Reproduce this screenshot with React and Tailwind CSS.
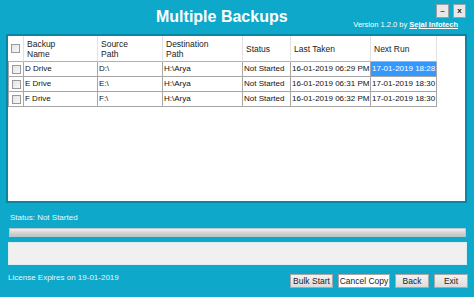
import { Fragment } from "react";

const rows = [
  { name: "D Drive", src: "D:\\", dest: "H:\\Arya", status: "Not Started", last: "16-01-2019 06:29 PM", next: "17-01-2019 18:28", selected: true },
  { name: "E Drive", src: "E:\\", dest: "H:\\Arya", status: "Not Started", last: "16-01-2019 06:31 PM", next: "17-01-2019 18:30" },
  { name: "F Drive", src: "F:\\", dest: "H:\\Arya", status: "Not Started", last: "16-01-2019 06:32 PM", next: "17-01-2019 18:30" },
];

function Check() {
  return <span className="block w-[9px] h-[9px] border border-[#9a9a9a] bg-gradient-to-br from-[#e4e4e4] to-[#f8f8f8]" />;
}

function Btn({ children, light, w }) {
  return (
    <button
      className={`h-[14px] ${w} border border-[#a8a8a8] text-[8.5px] leading-[12px] text-[#222] ${
        light ? "bg-white" : "bg-gradient-to-b from-[#f2f2f2] to-[#dcdcdc]"
      }`}
    >
      {children}
    </button>
  );
}

export default function App() {
  const head = "flex items-center px-[3px] border-r border-[#e2e2e2] border-b border-b-[#b0b0b0] text-[8.5px] leading-[10px] text-[#222]";
  const cell = "flex items-center px-[1px] border-r border-b border-[#a6a6a6] text-[8px] leading-[10px] text-[#111] whitespace-nowrap";

  return (
    <div className="w-[474px] h-[297px] bg-[#0ea8cb] flex flex-col font-['Liberation_Sans',Arial,sans-serif] overflow-hidden">
      {/* title bar */}
      <div className="relative h-[34px] flex items-start shrink-0">
        <h1 className="ml-[156px] mt-[8px] text-[16px] leading-[18px] font-bold text-white">Multiple Backups</h1>
        <div className="ml-auto mr-[16px] mt-[20px] text-[7.5px] leading-[9px] text-white">
          Version 1.2.0 by <span className="font-bold underline">Sejal Infotech</span>
        </div>
        <div className="absolute right-[8px] top-[4px] flex gap-[4px]">
          <span className="w-[13px] h-[14px] bg-[#e8e8e8] border border-[#a0a0a0] text-[8px] leading-[12px] text-center font-bold text-[#333]">–</span>
          <span className="w-[13px] h-[14px] bg-[#e8e8e8] border border-[#a0a0a0] text-[8px] leading-[12px] text-center font-bold text-[#222]">x</span>
        </div>
      </div>

      {/* grid panel */}
      <div className="mx-[6px] w-[461px] h-[169px] shrink-0 bg-white border-2 border-[#0a86a4]">
        <div className="grid grid-cols-[16px_74px_65px_80px_48px_80px_66px] grid-rows-[26px_15px_15px_15px] w-fit">
          <div className="flex items-center justify-center border-r border-[#e2e2e2] border-b border-b-[#b0b0b0]">
            <Check />
          </div>
          <div className={head}>Backup<br />Name</div>
          <div className={head}>Source<br />Path</div>
          <div className={head}>Destination<br />Path</div>
          <div className={head}>Status</div>
          <div className={head}>Last Taken</div>
          <div className={head}>Next Run</div>
          {rows.map((r) => (
            <Fragment key={r.name}>
              <div className="flex items-center justify-center border-r border-b border-l border-[#a6a6a6]">
                <Check />
              </div>
              <div className={cell}>{r.name}</div>
              <div className={cell}>{r.src}</div>
              <div className={cell}>{r.dest}</div>
              <div className={cell}>{r.status}</div>
              <div className={cell}>{r.last}</div>
              <div className={`${cell} ${r.selected ? "bg-[#3399ff] !text-white" : ""}`}>{r.next}</div>
            </Fragment>
          ))}
        </div>
      </div>

      {/* status area */}
      <div className="flex flex-col px-[8px] shrink-0">
        <div className="mt-[10px] ml-[2px] text-[8px] leading-[10px] text-[#eaf8fb]">Status: Not Started</div>
        <div className="mt-[5px] ml-[1px] h-[9px] border border-[#b9c7cb] bg-gradient-to-b from-[#f0f0f0] via-[#d6d6d6] to-[#c4c4c4]" />
        <div className="mt-[5px] h-[23px] w-[459px] bg-[#f0f0f0] border border-[#d9eef3]" />
        <div className="mt-[7px] flex items-start">
          <span className="mt-[1px] text-[8px] leading-[10px] text-[#e6f6fa]">License Expires on 19-01-2019</span>
          <div className="ml-auto mr-[-2px] mt-[2px] flex gap-[5px]">
            <Btn w="w-[43px]">Bulk Start</Btn>
            <Btn w="w-[52px]" light>Cancel Copy</Btn>
            <Btn w="w-[34px]">Back</Btn>
            <Btn w="w-[34px]">Exit</Btn>
          </div>
        </div>
      </div>
    </div>
  );
}
